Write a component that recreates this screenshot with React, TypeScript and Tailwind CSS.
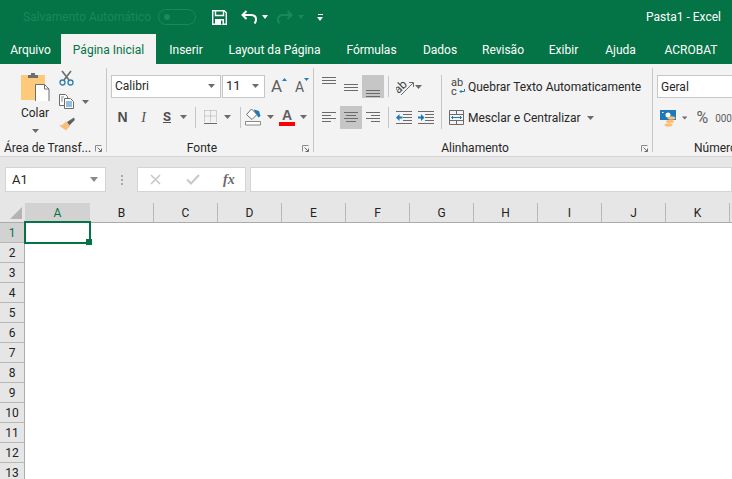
import React from "react";

const GREEN = "bg-[#047345]";

const Caret = ({ className = "" }: { className?: string }) => (
  <svg width="7" height="4" viewBox="0 0 7 4" className={className}>
    <path d="M0 0h7L3.5 4z" fill="#6b6b6b" />
  </svg>
);

const tabs = [
  { name: "Arquivo", w: "w-[61px]" },
  { name: "Página Inicial", w: "w-[95px]", active: true },
  { name: "Inserir", w: "w-[60px]" },
  { name: "Layout da Página", w: "w-[117px]" },
  { name: "Fórmulas", w: "w-[77px]" },
  { name: "Dados", w: "w-[60px]" },
  { name: "Revisão", w: "w-[66px]" },
  { name: "Exibir", w: "w-[55px]" },
  { name: "Ajuda", w: "w-[59px]" },
  { name: "ACROBAT", w: "w-[82px]" },
];

const TitleBar = () => (
  <div className={`flex h-[34px] items-center ${GREEN} text-white`}>
    <span className="ml-[23px] w-[135px] text-[12px] text-[#178a5c]">Salvamento Automático</span>
    <div className="flex h-[16px] w-[38px] items-center rounded-full border border-[#178a5c] pl-[5px]">
      <div className="h-[6px] w-[6px] rounded-full bg-[#178a5c]" />
    </div>
    <svg width="15" height="15" viewBox="0 0 15 15" className="ml-[16px]">
      <path d="M.7.7h11.5l2.1 2.1v11.5H.7z" fill="none" stroke="#fff" strokeWidth="1.4" />
      <path d="M3.5 1v4.5h8V1" fill="none" stroke="#fff" strokeWidth="1.4" />
      <path d="M3 9h9v5.5H3z" fill="#fff" />
      <path d="M9 10.5h1.5v4H9z" fill="#047345" />
    </svg>
    <svg width="16" height="14" viewBox="0 0 16 14" className="ml-[14px]">
      <path d="M5.5 1 1.5 5l4 4M2 5h8c3.5 0 5 2 5 4.500 0 1.500-.5 3-1.500 4" fill="none" stroke="#fff" strokeWidth="2" />
    </svg>
    <svg width="6" height="4" viewBox="0 0 6 4" className="ml-[5px]">
      <path d="M0 0h6L3 4z" fill="#fff" />
    </svg>
    <svg width="16" height="14" viewBox="0 0 16 14" className="ml-[9px]">
      <path d="M10.500 1l4 4-4 4M14 5H6C2.500 5 1 7 1 9.500c0 1.500.5 3 1.500 4" fill="none" stroke="#178a5c" strokeWidth="2" />
    </svg>
    <svg width="6" height="4" viewBox="0 0 6 4" className="ml-[5px]">
      <path d="M0 0h6L3 4z" fill="#178a5c" />
    </svg>
    <div className="ml-[13px] flex flex-col items-center gap-[2px]">
      <div className="h-[1px] w-[5px] bg-white" />
      <svg width="6" height="4" viewBox="0 0 6 4">
        <path d="M0 0h6L3 4z" fill="#fff" />
      </svg>
    </div>
    <span className="ml-auto mr-[11px] text-[12px]">Pasta1 - Excel</span>
  </div>
);

const TabBar = () => (
  <div className={`flex h-[30px] ${GREEN}`}>
    {tabs.map((t) => (
      <div
        key={t.name}
        className={`flex shrink-0 items-center justify-center pt-[1px] text-[12px] ${t.w} ${
          t.active ? "bg-[#f3f3f3] text-[#047345]" : "text-white"
        }`}
      >
        {t.name}
      </div>
    ))}
  </div>
);

const Launcher = () => (
  <svg width="7" height="7" viewBox="0 0 7 7" className="absolute bottom-0 right-[4px]">
    <path d="M.5 6.500v-6h6" fill="none" stroke="#8a8a8a" />
    <path d="M2.500 2.500l3.500 3.500M3.500 6.500h3v-3" fill="none" stroke="#6b6b6b" />
  </svg>
);

const Label = ({ children }: { children: React.ReactNode }) => (
  <div className="flex h-[16px] shrink-0 items-center justify-center pr-[16px] text-[12px] text-[#262626]">{children}</div>
);

const Sep = ({ className = "" }: { className?: string }) => (
  <div className={`w-[1px] shrink-0 bg-[#c6c6c6] ${className}`} />
);

const PasteIcon = () => (
  <svg width="29" height="29" viewBox="0 0 29 29">
    <path d="M0 3h24v25H0z" fill="#fdc97b" />
    <path d="M7 3h10V6H7zM10 1h4v3h-4z" fill="#6e6e6e" />
    <path d="M14.500 12.500h9l4.500 4.500v12.500H14.500z" fill="#fff" stroke="#6e6e6e" />
    <path d="M23.500 12.500v4.500H28" fill="none" stroke="#6e6e6e" />
  </svg>
);

const Scissors = () => (
  <svg width="15" height="16" viewBox="0 0 15 16">
    <path d="M3 1l7 9M12 1 5 10" fill="none" stroke="#6b6b6b" strokeWidth="1.600" />
    <circle cx="3.500" cy="12.500" r="2.500" fill="none" stroke="#2a7cba" strokeWidth="1.300" />
    <circle cx="11.500" cy="12.500" r="2.500" fill="none" stroke="#2a7cba" strokeWidth="1.300" />
  </svg>
);

const CopyIcon = () => (
  <svg width="15" height="15" viewBox="0 0 15 15">
    <path d="M.5.500h6l2 2v9h-8z" fill="#fff" stroke="#6b6b6b" />
    <path d="M5.500 4.500h6l3 3v7h-9z" fill="#fff" stroke="#6b6b6b" />
    <path d="M7 8h6M7 10h6M7 12h6" stroke="#2a7cba" />
    <path d="M2 3h3M2 5h2M2 7h2" stroke="#8a8a8a" />
  </svg>
);

const BrushIcon = () => (
  <svg width="16" height="15" viewBox="0 0 16 15">
    <path d="M8 5l7-4.500 .8 2.500-5.500 5.500z" fill="#5f5f5f" />
    <path d="M7 4.500l4 4.500-4 4.500L0 8.500l3-.5z" fill="#f7bf78" />
  </svg>
);

const FillIcon = () => (
  <svg width="17" height="18" viewBox="0 0 17 18">
    <path d="M6.500 1l5.500 5.500-5 5-5.500-5z" fill="#fff" stroke="#6b6b6b" />
    <path d="M9 1.500l5 1.500 1.500 5-2 1.500-4-6z" fill="#1f78b8" />
    <path d="M.5 13.500h15v3.500H.5z" fill="#fff" stroke="#8a8a8a" />
  </svg>
);

const GrowA = ({ up }: { up: boolean }) => (
  <div className="flex items-start">
    <span className={up ? "text-[17px] leading-[20px] text-[#5f5f5f]" : "mt-[2px] text-[14px] leading-[18px] text-[#5f5f5f]"}>A</span>
    <svg width="5" height="3" viewBox="0 0 5 3" className="mt-[2px]">
      <path d={up ? "M0 3h5L2.500 0z" : "M0 0h5L2.500 3z"} fill="#2a7cba" />
    </svg>
  </div>
);

const BordersIcon = () => (
  <svg width="13" height="14" viewBox="0 0 13 14">
    <path d="M.5.500h12M.5.500v11M12.500.500v11M6.500.500v11M.5 6h12" stroke="#a8a8a8" strokeDasharray="1 1" fill="none" />
    <path d="M0 13.500h13" stroke="#6b6b6b" />
  </svg>
);

// three lines, used by all the alignment buttons
const Lines = ({ d }: { d: string }) => (
  <svg width="16" height="12" viewBox="0 0 16 12">
    <path d={d} stroke="#6b6b6b" fill="none" />
  </svg>
);

const AlignCell = ({ on, d, className = "" }: { on?: boolean; d: string; className?: string }) => (
  <div className={`flex h-[23px] w-[22px] justify-center ${on ? "bg-[#c6c6c6]" : ""} ${className}`}>
    <Lines d={d} />
  </div>
);

const Indent = ({ right }: { right?: boolean }) => (
  <svg width="16" height="13" viewBox="0 0 16 13">
    <path d="M0 .5h16M7 3.500h9M7 6.500h9M7 9.500h9M0 12.500h16" stroke="#6b6b6b" />
    <path d={right ? "M0 5.500h3V3l3.500 3.500L3 10V7.500H0z" : "M6.500 5.500h-3V3L0 6.500 3.500 10V7.500h3z"} fill="#1f78b8" />
  </svg>
);

const Orientation = () => (
  <svg width="18" height="18" viewBox="0 0 18 18">
    <text x="-1" y="12" fontSize="12" fill="#444" transform="rotate(-45 6 10)" fontFamily="Roboto, sans-serif">ab</text>
    <path d="M5 17 17 5M13 4.500h4.500V9" fill="none" stroke="#6b6b6b" />
  </svg>
);

const WrapIcon = () => (
  <div className="relative h-[18px] w-[15px] text-[11px] leading-[9px] text-[#444]">
    <div>ab</div>
    <div>c</div>
    <svg width="6" height="5" viewBox="0 0 6 5" className="absolute bottom-[2px] right-[1px]">
      <path d="M5.500 0v2.500H1M2.500 1 1 2.500 2.500 4" fill="none" stroke="#1f78b8" />
    </svg>
  </div>
);

const MergeIcon = () => (
  <svg width="15" height="15" viewBox="0 0 15 15">
    <path d="M.5.500h14v14H.5zM.5 4.500h14M.5 10.500h14M7.500.500v4M7.500 10.500v4" fill="none" stroke="#6b6b6b" />
    <path d="M2.500 7.500h10M4 6 2.500 7.500 4 9M11 6l1.500 1.500L11 9" fill="none" stroke="#1f78b8" />
  </svg>
);

const MoneyIcon = () => (
  <svg width="17" height="17" viewBox="0 0 17 17">
    <path d="M0 0h16v10H0z" fill="#1f78b8" />
    <circle cx="8" cy="5" r="2.500" fill="#fff" />
    <path d="M2 2h1.500v1H2zM12.500 7H14v1h-1.500z" fill="#fff" />
    <ellipse cx="11.500" cy="8" rx="4" ry="1.700" fill="#f7bf78" />
    <ellipse cx="10" cy="11.500" rx="4" ry="1.700" fill="#f7bf78" />
    <ellipse cx="8.500" cy="15" rx="4" ry="1.700" fill="#f7bf78" />
  </svg>
);

const Ribbon = () => (
  <div className="flex h-[93px] shrink-0 border-b border-[#d4d4d4] bg-[#f3f3f3] pt-[4px] text-[#262626]">
    {/* clipboard */}
    <div className="relative flex h-[84px] w-[107px] shrink-0 flex-col border-r border-[#c6c6c6]">
      <div className="flex h-[72px] shrink-0">
        <div className="ml-[16px] flex w-[38px] flex-col items-center pt-[4px]">
          <PasteIcon />
          <span className="mt-[4px] text-[12px] leading-[16px]">Colar</span>
          <Caret className="mt-[8px]" />
        </div>
        <div className="ml-[5px] flex flex-col">
          <div className="mt-[2px]"><Scissors /></div>
          <div className="mt-[8px] flex items-center">
            <CopyIcon />
            <Caret className="ml-[8px]" />
          </div>
          <div className="mt-[8px]"><BrushIcon /></div>
        </div>
      </div>
      <div className="shrink-0 pl-[4px] text-[12px] leading-[16px] whitespace-nowrap">Área de Transf...</div>
      <Launcher />
    </div>

    {/* font */}
    <div className="relative flex h-[84px] w-[207px] shrink-0 flex-col border-r border-[#c6c6c6]">
      <div className="h-[72px] shrink-0 pl-[4px] pt-[7px]">
        <div className="flex h-[22px] items-center">
          <div className="flex h-[23px] w-[110px] items-center justify-between border border-[#c6c6c6] bg-white px-[3px] pr-[5px] text-[12px]">
            Calibri <Caret />
          </div>
          <div className="ml-[1px] flex h-[23px] w-[43px] items-center justify-between border border-[#c6c6c6] bg-white px-[3px] pr-[5px] text-[13px]">
            11 <Caret />
          </div>
          <div className="ml-[6px]"><GrowA up /></div>
          <div className="ml-[8px]"><GrowA up={false} /></div>
        </div>
        <div className="mt-[9px] flex h-[22px] items-center">
          <span className="ml-[1px] w-[21px] text-center font-['Liberation_Sans'] text-[14px] font-bold text-[#505050]">N</span>
          <span className="w-[21px] text-center font-['Liberation_Serif'] text-[14px] italic text-[#505050]">I</span>
          <span className="w-[26px] text-center text-[13px] font-bold text-[#505050] underline">S</span>
          <Caret />
          <Sep className="ml-[8px] h-[21px]" />
          <div className="ml-[8px]"><BordersIcon /></div>
          <Caret className="ml-[7px]" />
          <Sep className="ml-[9px] h-[21px]" />
          <div className="ml-[4px]"><FillIcon /></div>
          <Caret className="ml-[5px]" />
          <div className="ml-[5px] flex w-[16px] flex-col items-center">
            <span className="font-['Liberation_Sans'] text-[14px] leading-[14px] font-bold text-[#5f5f5f]">A</span>
            <div className="h-[4px] w-[16px] bg-[#fb0007]" />
          </div>
          <Caret className="ml-[5px]" />
        </div>
      </div>
      <Label>Fonte</Label>
      <Launcher />
    </div>

    {/* alignment */}
    <div className="relative flex h-[84px] w-[339px] shrink-0 flex-col border-r border-[#c6c6c6]">
      <div className="flex h-[72px] shrink-0 pl-[4px] pt-[7px]">
        <div className="flex flex-col">
          <div className="flex">
            <AlignCell d="M1 .5h14M1 3.500h14M1 6.500h14" className="items-start pt-[2px]" />
            <AlignCell d="M1 3.500h14M1 6.500h14M1 9.500h14" className="items-center" />
            <AlignCell on d="M1 5.500h14M1 8.500h14M1 11.500h14" className="items-end pb-[1px]" />
          </div>
          <div className="mt-[8px] flex">
            <AlignCell d="M1 .5h14M1 3.500h9M1 6.500h14M1 9.500h9" className="items-center" />
            <AlignCell on d="M1 .5h14M3 3.500h10M1 6.500h14M3 9.500h10" className="items-center" />
            <AlignCell d="M1 .5h14M6 3.500h9M1 6.500h14M6 9.500h9" className="items-center" />
          </div>
        </div>
        <div className="ml-[4px] flex flex-col">
          <div className="flex h-[23px] items-center">
            <Sep className="h-[21px]" />
            <div className="ml-[7px]"><Orientation /></div>
            <Caret className="ml-[1px]" />
          </div>
          <div className="mt-[8px] flex h-[23px] items-center">
            <Sep className="h-[21px]" />
            <div className="ml-[7px]"><Indent /></div>
            <div className="ml-[6px]"><Indent right /></div>
          </div>
        </div>
        <Sep className="ml-[7px] h-[54px]" />
        <div className="ml-[7px] flex flex-col text-[12px]">
          <div className="flex h-[23px] items-center pl-[2px]">
            <WrapIcon />
            <span className="ml-[2px] whitespace-nowrap">Quebrar Texto Automaticamente</span>
          </div>
          <div className="mt-[8px] flex h-[23px] items-center">
            <MergeIcon />
            <span className="ml-[4px] whitespace-nowrap">Mesclar e Centralizar</span>
            <Caret className="ml-[6px]" />
          </div>
        </div>
      </div>
      <Label>Alinhamento</Label>
      <Launcher />
    </div>

    {/* number, cut off by the window */}
    <div className="flex min-w-0 flex-1 flex-col overflow-hidden pl-[4px] pt-[7px]">
      <div className="-mr-[4px] flex h-[23px] shrink-0 items-center border border-[#c6c6c6] bg-white pl-[3px] text-[12px]">Geral</div>
      <div className="mt-[9px] flex h-[22px] shrink-0 items-center whitespace-nowrap">
        <div className="ml-[3px]"><MoneyIcon /></div>
        <Caret className="ml-[5px]" />
        <span className="ml-[9px] text-[16px] text-[#5f5f5f]">%</span>
        <span className="ml-[7px] text-[10px] text-[#5f5f5f]">000</span>
      </div>
      <div className="mt-[11px] shrink-0 pl-[37px] text-[12px] leading-[16px] whitespace-nowrap">Número</div>
    </div>
  </div>
);

const FormulaBar = () => (
  <div className="flex h-[46px] shrink-0 items-start bg-[#e6e6e6] pt-[10px]">
    <div className="ml-[5px] flex h-[25px] w-[101px] items-center justify-between border border-[#d4d4d4] bg-white pl-[6px] pr-[7px] text-[13px] text-[#262626]">
      A1
      <svg width="8" height="5" viewBox="0 0 8 5"><path d="M0 0h8L4 5z" fill="#8a8a8a" /></svg>
    </div>
    <div className="ml-[15px] mt-[8px] flex flex-col gap-[2px]">
      <div className="h-[2px] w-[2px] bg-[#a8a8a8]" />
      <div className="h-[2px] w-[2px] bg-[#a8a8a8]" />
      <div className="h-[2px] w-[2px] bg-[#a8a8a8]" />
    </div>
    <div className="ml-[14px] flex h-[25px] w-[109px] items-center border border-[#d4d4d4] bg-white">
      <svg width="11" height="11" viewBox="0 0 11 11" className="ml-[12px]">
        <path d="M1 1l9 9M10 1l-9 9" stroke="#c8c8c8" strokeWidth="1.600" />
      </svg>
      <svg width="14" height="11" viewBox="0 0 14 11" className="ml-[25px]">
        <path d="M1 5.500 5 9.500 13 1" fill="none" stroke="#c8c8c8" strokeWidth="2" />
      </svg>
      <span className="ml-[23px] font-['Liberation_Serif'] text-[14px] font-bold italic text-[#6b6b6b]">fx</span>
    </div>
    <div className="ml-[4px] h-[25px] flex-1 border border-[#d4d4d4] bg-white" />
  </div>
);

const cols = ["A", "B", "C", "D", "E", "F", "G", "H", "I", "J", "K"];
const rows = [1, 2, 3, 4, 5, 6, 7, 8, 9, 10, 11, 12, 13];

const Sheet = () => (
  <div className="flex min-h-0 flex-1 flex-col overflow-hidden bg-white">
    <div className="flex h-[20px] shrink-0 border-b border-[#ababab] bg-[#e6e6e6]">
      <div className="flex h-full w-[25px] shrink-0 items-end justify-end bg-[#e6e6e6] pb-[3px] pr-[3px]">
        <svg width="12" height="12" viewBox="0 0 12 12"><path d="M12 0v12H0z" fill="#b4b4b4" /></svg>
      </div>
      {cols.map((c, i) => (
        <div
          key={c}
          className={`flex shrink-0 items-center justify-center text-[12px] ${
            i === 0
              ? "w-[65px] bg-[#d2d2d2] text-[#047345]"
              : "w-[64px] border-r border-[#b8b8b8] text-[#222]"
          }`}
        >
          {c}
        </div>
      ))}
    </div>
    <div className="relative flex flex-1">
      <div className="w-[25px] shrink-0 border-r border-[#ababab]">
        {rows.map((r) => (
          <div
            key={r}
            className={`flex h-[20px] items-center justify-center border-b border-[#b8b8b8] text-[12px] ${
              r === 1 ? "bg-[#d2d2d2] text-[#047345]" : "bg-[#e6e6e6] text-[#222]"
            }`}
          >
            {r}
          </div>
        ))}
      </div>
      {/* selected cell */}
      <div className="absolute left-[24px] top-[-2px] h-[23px] w-[67px] border-2 border-[#047345]">
        <div className="absolute -bottom-[3px] -right-[3px] h-[6px] w-[6px] bg-[#047345]" />
      </div>
    </div>
  </div>
);

export default function App() {
  return (
    <div className="flex h-[479px] w-[732px] flex-col overflow-hidden bg-white font-['Roboto',sans-serif]">
      <TitleBar />
      <TabBar />
      <Ribbon />
      <FormulaBar />
      <Sheet />
    </div>
  );
}
